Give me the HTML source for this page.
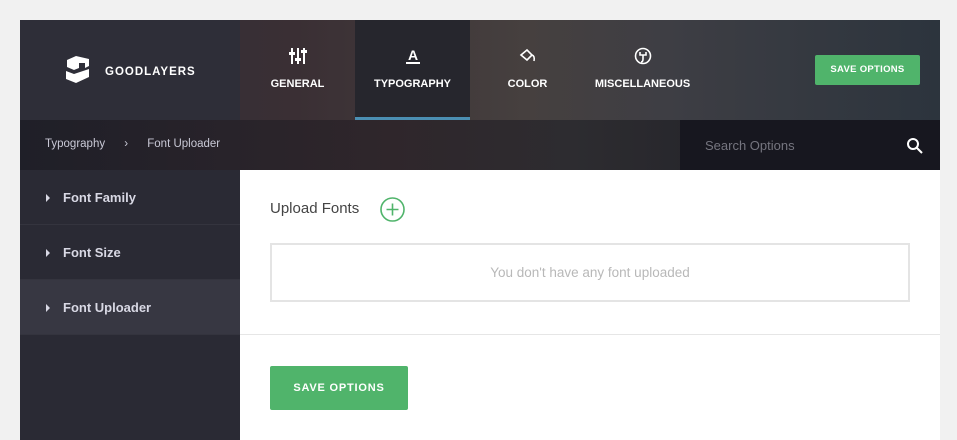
<!DOCTYPE html>
<html><head><meta charset="utf-8"><style>
*{margin:0;padding:0;box-sizing:border-box}
body{width:957px;height:440px;background:#f1f1f1;font-family:"Liberation Sans",sans-serif;overflow:hidden;position:relative}
.hdr{position:absolute;left:20px;top:20px;width:920px;height:100px;background:linear-gradient(90deg,#2f2f3a 0%,#3a2f34 30%,#46403f 55%,#3e3e44 70%,#2c343d 100%)}
.logo{position:absolute;left:0;top:0;width:220px;height:100px;background:#2e2e38}
.logo span{position:absolute;left:85px;top:46px;color:#fff;font-weight:bold;font-size:11.5px;letter-spacing:1px}
.tab{position:absolute;top:0;height:100px;color:#fff;font-weight:bold;font-size:11px;text-align:center}
.tab .t{position:absolute;top:58px;width:100%}
.tab svg{position:absolute;top:27px;left:50%;margin-left:-9px}
.sub{position:absolute;left:20px;top:120px;width:920px;height:50px;background:linear-gradient(90deg,#1f1f28,#2f262b 40%,#2d2c30 60%,#1b1c24)}
.crumb{position:absolute;left:25px;top:18px;color:#c9c9d6;font-size:11.5px}
.search{position:absolute;left:660px;top:0;width:260px;height:50px;background:#17171f}
.search span{position:absolute;left:25px;top:18px;color:#75757f;font-size:13px}
.side{position:absolute;left:20px;top:170px;width:220px;height:270px;background:#2a2a34}
.item{height:55px;border-bottom:1px solid #34343e;color:#d8d8e4;font-weight:bold;font-size:13px;padding:20px 0 0 43px;position:relative}
.item:before{content:"";position:absolute;left:26px;top:24px;border-left:4px solid #d8d8e4;border-top:4px solid transparent;border-bottom:4px solid transparent}
.item.a{background:#373742}
.main{position:absolute;left:240px;top:170px;width:700px;height:270px;background:#fff}
.btn{position:absolute;background:#50b46b;color:#fff;font-weight:bold;letter-spacing:.8px;text-align:center;border-radius:2px}
</style></head><body>
<div class="hdr">
 <div class="logo">
  <svg style="position:absolute;left:44px;top:35px" width="28" height="30" viewBox="0 0 28 30"><path d="M3 5 L12 1 L25 4 L25 11 L21 13 L21 8 L15 8 L15 13 L10 15 L3 12Z" fill="#fff"/><path d="M2 16 L10 19 L25 14 L25 22 L12 28 L2 24Z" fill="#fff"/></svg>
  <span>GOODLAYERS</span>
 </div>
 <div class="tab" style="left:220px;width:115px"><svg width="18" height="18" viewBox="0 0 18 18" fill="#fff"><rect x="2" y="1" width="2" height="16"/><rect x="8" y="1" width="2" height="16"/><rect x="14" y="1" width="2" height="16"/><rect x="0" y="5" width="6" height="3"/><rect x="6" y="11" width="6" height="3"/><rect x="12" y="3" width="6" height="3"/></svg><div class="t">GENERAL</div></div>
 <div class="tab" style="left:335px;width:115px;background:#26262d;border-bottom:3px solid #4b8fb3"><svg width="18" height="18" viewBox="0 0 18 18"><text x="9" y="13" fill="#fff" font-size="14" font-weight="bold" text-anchor="middle" font-family="Liberation Sans">A</text><rect x="2" y="15" width="14" height="2" fill="#fff"/></svg><div class="t">TYPOGRAPHY</div></div>
 <div class="tab" style="left:450px;width:115px"><svg width="18" height="18" viewBox="0 0 18 18" fill="none" stroke="#fff" stroke-width="1.6"><path d="M2 8 L8 3 L13 8 L8 13Z"/><path d="M13 8 Q16 9 15 14"/></svg><div class="t">COLOR</div></div>
 <div class="tab" style="left:565px;width:115px"><svg width="18" height="18" viewBox="0 0 18 18" fill="none" stroke="#fff" stroke-width="1.6"><circle cx="9" cy="9" r="7.5"/><path d="M6 5v3h6V5M9 8v4q0 3 -2 3" /></svg><div class="t">MISCELLANEOUS</div></div>
 <div class="btn" style="left:795px;top:35px;width:105px;height:30px;font-size:9.5px;line-height:30px;letter-spacing:.3px">SAVE OPTIONS</div>
</div>
<div class="sub">
 <div class="crumb">Typography &nbsp;&nbsp;&nbsp;&nbsp;&nbsp;›&nbsp;&nbsp;&nbsp;&nbsp;&nbsp; Font Uploader</div>
 <div class="search"><span>Search Options</span>
  <svg style="position:absolute;left:226px;top:17px" width="18" height="18" viewBox="0 0 18 18" fill="none" stroke="#fff" stroke-width="2"><circle cx="7" cy="7" r="5"/><path d="M11 11l5 5"/></svg></div>
</div>
<div class="side">
 <div class="item">Font Family</div>
 <div class="item">Font Size</div>
 <div class="item a">Font Uploader</div>
</div>
<div class="main">
 <div style="position:absolute;left:30px;top:30px;font-size:15px;color:#444">Upload Fonts</div>
 <svg style="position:absolute;left:140px;top:27px" width="25" height="25" viewBox="0 0 25 25" fill="none" stroke="#50b46b" stroke-width="1.6"><circle cx="12.5" cy="12.5" r="11.5"/><path d="M12.5 6.5v12M6.5 12.5h12"/></svg>
 <div style="position:absolute;left:30px;top:73px;width:640px;height:59px;border:2px solid #e4e4e4;text-align:center;line-height:55px;color:#b8b8b8;font-size:13.5px">You don't have any font uploaded</div>
 <div style="position:absolute;left:0;top:164px;width:700px;height:1px;background:#e6e6e6"></div>
 <div class="btn" style="left:30px;top:196px;width:138px;height:44px;line-height:44px;font-size:11px">SAVE OPTIONS</div>
</div>
</body></html>
